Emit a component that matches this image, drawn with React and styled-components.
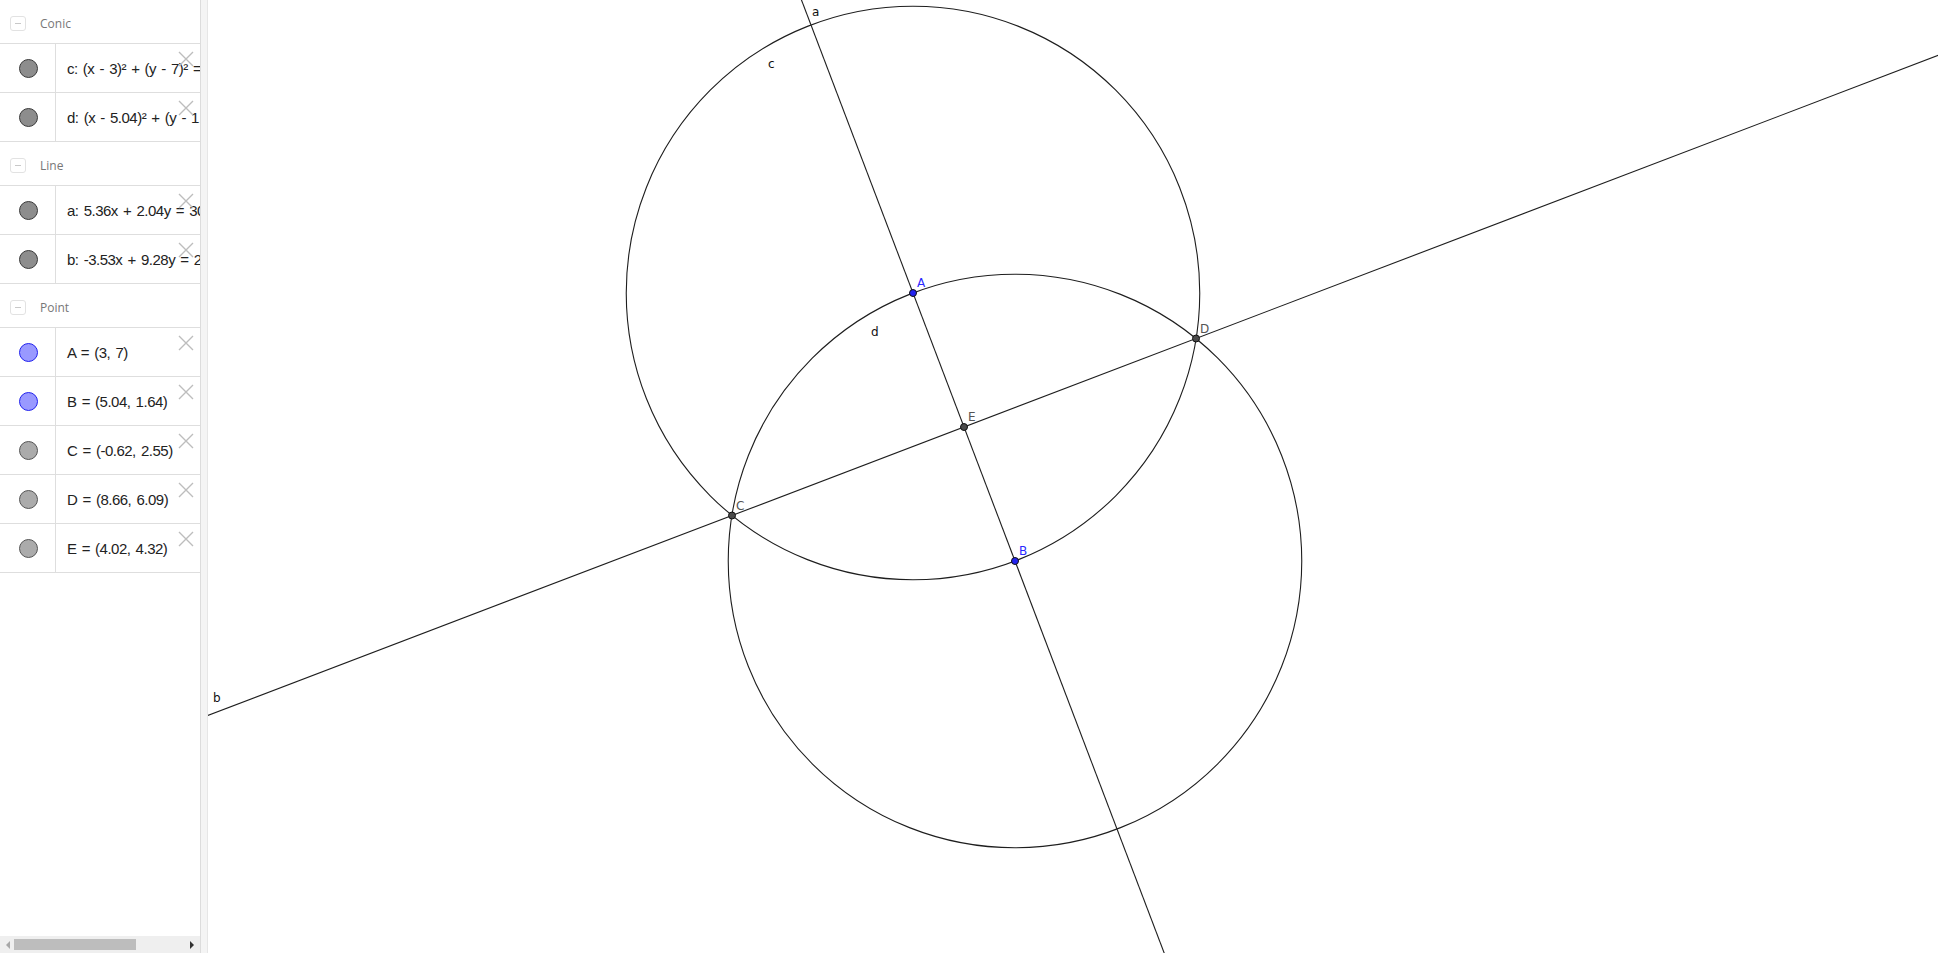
import React from 'react';
import styled, { createGlobalStyle } from 'styled-components';

const GlobalStyle = createGlobalStyle`
    html, body {
        margin: 0;
        padding: 0;
        background: #fff;
        overflow: hidden;
    }
    #root {
        height: 953px;
    }
`;

// math -> screen (page px)
const ORIGIN_X = 763;
const ORIGIN_Y = 643;
const UNIT = 50;
const px = (x) => ORIGIN_X + x * UNIT;
const py = (y) => ORIGIN_Y - y * UNIT;

const sections = [
    {
        title: 'Conic',
        rows: [
            { text: 'c: (x - 3)² + (y - 7)² = 32.89', kind: 'object' },
            { text: 'd: (x - 5.04)² + (y - 1.64)² = 32.89', kind: 'object' },
        ],
    },
    {
        title: 'Line',
        rows: [
            { text: 'a: 5.36x + 2.04y = 30.36', kind: 'object' },
            { text: 'b: -3.53x + 9.28y = 25.9', kind: 'object' },
        ],
    },
    {
        title: 'Point',
        rows: [
            { text: 'A = (3, 7)', kind: 'free' },
            { text: 'B = (5.04, 1.64)', kind: 'free' },
            { text: 'C = (-0.62, 2.55)', kind: 'dependent' },
            { text: 'D = (8.66, 6.09)', kind: 'dependent' },
            { text: 'E = (4.02, 4.32)', kind: 'dependent' },
        ],
    },
];

const markerColors = {
    object: { fill: '#8d8d8d', border: '#3a3a3a' },
    free: { fill: '#9999ff', border: '#2222ee' },
    dependent: { fill: '#ababab', border: '#555' },
};

const Layout = styled.div`
    display: flex;
    width: 1938px;
    height: 953px;
    overflow: hidden;
`;

const AlgebraPanel = styled.div`
    width: 200px;
    flex: none;
    display: flex;
    flex-direction: column;
    background: #fff;
`;

const AlgebraList = styled.div`
    flex: 1;
    overflow: hidden;
`;

const SectionHeader = styled.div`
    height: 44px;
    display: flex;
    align-items: center;
    gap: 14px;
    padding-left: 10px;
    padding-top: 3px;
    border-bottom: 1px solid #dedede;
    font-family: "Open Sans", "Noto Sans", sans-serif;
    font-size: 12px;
    color: #777;
    box-sizing: border-box;
`;

const Toggle = styled.div`
    width: 14px;
    height: 13px;
    border: 1px solid #e2e2e2;
    border-radius: 3px;
    display: flex;
    align-items: center;
    justify-content: center;

    &::after {
        content: '';
        width: 6px;
        height: 1px;
        background: #c8c8c8;
    }
`;

const Row = styled.div`
    position: relative;
    height: 49px;
    display: flex;
    border-bottom: 1px solid #dedede;
    box-sizing: border-box;
    overflow: hidden;
`;

const MarkerCell = styled.div`
    width: 56px;
    flex: none;
    display: flex;
    align-items: center;
    justify-content: center;
    border-right: 1px solid #dedede;
    box-sizing: border-box;
    padding-left: 1px;
`;

const Marker = styled.div`
    width: 17px;
    height: 17px;
    border-radius: 50%;
    background: ${(p) => p.$fill};
    border: 1px solid ${(p) => p.$border};
`;

const RowText = styled.div`
    display: flex;
    align-items: center;
    padding-left: 11px;
    white-space: nowrap;
    font-family: "Liberation Sans", Arial, sans-serif;
    font-size: 15px;
    letter-spacing: -0.5px;
    word-spacing: 1.5px;
    color: #222;
`;

const DeleteButton = styled.svg`
    position: absolute;
    top: 7px;
    right: 6px;
    width: 16px;
    height: 16px;
`;

const ScrollBar = styled.div`
    height: 17px;
    flex: none;
    display: flex;
    align-items: center;
    background: #efefef;
    padding: 0 3px;
    box-sizing: border-box;
    gap: 3px;
`;

const ScrollArrow = styled.div`
    width: 0;
    height: 0;
    border-top: 4px solid transparent;
    border-bottom: 4px solid transparent;
    ${(p) => (p.$dir === 'left'
        ? 'border-right: 4px solid #a8a8a8; margin-left: 3px;'
        : 'border-left: 4px solid #333; margin-left: auto; margin-right: 3px;')}
`;

const ScrollThumb = styled.div`
    width: 122px;
    height: 11px;
    background: #bdbdbd;
    margin-left: 1px;
`;

const Splitter = styled.div`
    width: 6px;
    flex: none;
    background: #f4f4f4;
    border-left: 1px solid #dcdcdc;
    border-right: 1px solid #e6e6e6;
`;

const GraphicsView = styled.div`
    flex: 1;
    position: relative;
    background: #fff;
`;

const Canvas = styled.svg`
    display: block;
    width: 100%;
    height: 100%;
    font-family: "DejaVu Sans", "Liberation Sans", sans-serif;
    font-size: 12px;
`;

function DeleteIcon() {
    return (
        <DeleteButton viewBox="0 0 16 16">
            <path d="M1 1 L15 15 M15 1 L1 15" stroke="#bdbdbd" strokeWidth="1.4" fill="none" />
        </DeleteButton>
    );
}

function AlgebraView() {
    return (
        <AlgebraPanel>
            <AlgebraList>
                {sections.map((section) => (
                    <div key={section.title}>
                        <SectionHeader>
                            <Toggle />
                            <span>{section.title}</span>
                        </SectionHeader>
                        {section.rows.map((row) => {
                            const colors = markerColors[row.kind];
                            return (
                                <Row key={row.text}>
                                    <MarkerCell>
                                        <Marker $fill={colors.fill} $border={colors.border} />
                                    </MarkerCell>
                                    <RowText>{row.text}</RowText>
                                    <DeleteIcon />
                                </Row>
                            );
                        })}
                    </div>
                ))}
            </AlgebraList>
            <ScrollBar>
                <ScrollArrow $dir="left" />
                <ScrollThumb />
                <ScrollArrow $dir="right" />
            </ScrollBar>
        </AlgebraPanel>
    );
}

const points = [
    { name: 'A', x: 3, y: 7, free: true },
    { name: 'B', x: 5.04, y: 1.64, free: true },
    { name: 'C', x: -0.62, y: 2.55 },
    { name: 'D', x: 8.66, y: 6.09 },
    { name: 'E', x: 4.02, y: 4.32 },
];

function Drawing() {
    const A = points[0];
    const B = points[1];
    const C = points[2];
    const D = points[3];
    const r = Math.hypot(B.x - A.x, B.y - A.y) * UNIT;

    // line a through A, B ; extend far
    const ax1 = px(A.x), ay1 = py(A.y), ax2 = px(B.x), ay2 = py(B.y);
    const adx = ax2 - ax1, ady = ay2 - ay1;
    // line b through C, D
    const bx1 = px(C.x), by1 = py(C.y), bx2 = px(D.x), by2 = py(D.y);
    const bdx = bx2 - bx1, bdy = by2 - by1;
    const k = 20;

    return (
        <Canvas viewBox="208 0 1730 953" preserveAspectRatio="none">
            <g fill="none" stroke="#1e1e1e" strokeWidth="1.1">
                <circle cx={px(A.x)} cy={py(A.y)} r={r} />
                <circle cx={px(B.x)} cy={py(B.y)} r={r} />
                <line x1={ax1 - adx * k} y1={ay1 - ady * k} x2={ax1 + adx * k} y2={ay1 + ady * k} />
                <line x1={bx1 - bdx * k} y1={by1 - bdy * k} x2={bx1 + bdx * k} y2={by1 + bdy * k} />
            </g>
            <g fill="#111">
                <text x="812" y="16">a</text>
                <text x="213" y="702">b</text>
                <text x="768" y="68">c</text>
                <text x="871" y="336">d</text>
            </g>
            {points.map((p) => (
                <g key={p.name}>
                    <circle
                        cx={px(p.x)}
                        cy={py(p.y)}
                        r="3.5"
                        fill={p.free ? '#2323f0' : '#4a4a4a'}
                        stroke="#111"
                        strokeWidth="1"
                    />
                    <text
                        x={px(p.x) + 4}
                        y={py(p.y) - 6}
                        fill={p.free ? '#2a2aff' : '#555'}
                    >
                        {p.name}
                    </text>
                </g>
            ))}
        </Canvas>
    );
}

export default function App() {
    return (
        <>
            <GlobalStyle />
            <Layout>
                <AlgebraView />
                <Splitter />
                <GraphicsView>
                    <Drawing />
                </GraphicsView>
            </Layout>
        </>
    );
}
